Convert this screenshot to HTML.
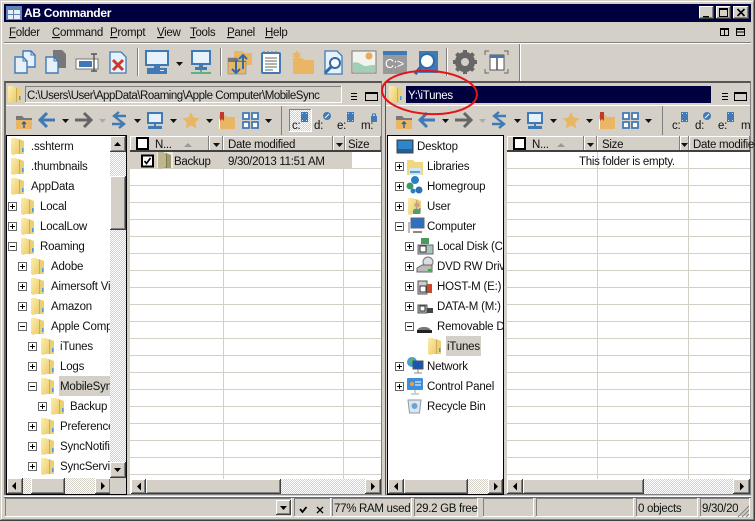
<!DOCTYPE html>
<html><head><meta charset="utf-8"><title>AB Commander</title>
<style>
html,body{margin:0;padding:0;background:#d4d0c8}
#w{position:relative;width:755px;height:521px;overflow:hidden;background:#d4d0c8;font-family:"Liberation Sans",sans-serif}
#w div{position:absolute;box-sizing:border-box}
.b{background:#d4d0c8;box-shadow:inset -1px -1px #404040,inset 1px 1px #fff,inset -2px -2px #808080}
.h{background:#d4d0c8;box-shadow:inset 0 -2px #404040,inset -1px 0 #808080,inset 1px 1px #fff}
.s{box-shadow:inset -1px -1px #fff,inset 1px 1px #808080}
.d{background:repeating-conic-gradient(#d4d0c8 0 25%,#fff 0 50%) 0 0/2px 2px}
.l{background:#d4d0c8}
svg{position:absolute;left:0;top:0}
text{font-family:"Liberation Sans",sans-serif;font-size:11.5px;letter-spacing:-.3px;fill:#111}
.t text{letter-spacing:-.2px}
</style></head><body>
<div id="w">
<div style="left:0;top:0;width:755px;height:521px;box-shadow:inset -1px -1px #404040,inset 0 1px #d4d0c8,inset 1px 0 #d4d0c8,inset -2px -2px #808080,inset 2px 2px #fff"></div>
<div style="left:4px;top:4px;width:747px;height:18px;background:#00003f"></div>
<div style="left:4px;top:42px;width:747px;height:1px;background:#808080"></div>
<div style="left:4px;top:43px;width:747px;height:1px;background:#fff"></div>
<div style="left:519px;top:44px;width:1px;height:37px;background:#808080"></div>
<div style="left:520px;top:44px;width:1px;height:37px;background:#fff"></div>
<div style="left:137px;top:48px;width:1px;height:28px;background:#808080"></div>
<div style="left:138px;top:48px;width:1px;height:28px;background:#fff"></div>
<div style="left:220px;top:48px;width:1px;height:28px;background:#808080"></div>
<div style="left:221px;top:48px;width:1px;height:28px;background:#fff"></div>
<div style="left:446px;top:48px;width:1px;height:28px;background:#808080"></div>
<div style="left:447px;top:48px;width:1px;height:28px;background:#fff"></div>
<div class="b" style="left:699px;top:6px;width:15px;height:13px"></div>
<div class="b" style="left:716px;top:6px;width:15px;height:13px"></div>
<div class="b" style="left:733px;top:6px;width:16px;height:13px"></div>
<!-- panels -->
<div style="left:4px;top:81px;width:378px;height:414px;border-top:2px solid #555;border-left:2px solid #666;border-right:1px solid #808080;border-bottom:1px solid #808080"></div>
<div style="left:385px;top:81px;width:366px;height:414px;border-top:2px solid #555;border-left:1px solid #555;border-right:1px solid #808080;border-bottom:1px solid #808080"></div>
<div class="s" style="left:25px;top:86px;width:317px;height:17px"></div>
<div style="left:406px;top:86px;width:305px;height:17px;background:#00003f"></div>
<div style="left:6px;top:105px;width:375px;height:1px;background:#fff"></div>
<div style="left:386px;top:105px;width:364px;height:1px;background:#fff"></div>
<div style="left:281px;top:106px;width:1px;height:29px;background:#808080"></div>
<div style="left:662px;top:106px;width:1px;height:29px;background:#808080"></div>
<div class="s d" style="left:289px;top:109px;width:23px;height:23px"></div>
<!-- left tree -->
<div style="left:6px;top:135px;width:121px;height:360px;background:#fff;border:1px solid #000"></div>
<div style="left:59px;top:376px;width:51px;height:20px;background:#d4d0c8"></div>
<div class="d" style="left:110px;top:136px;width:16px;height:342px"></div>
<div class="b" style="left:110px;top:136px;width:16px;height:16px"></div>
<div class="b" style="left:110px;top:176px;width:16px;height:54px"></div>
<div class="b" style="left:110px;top:462px;width:16px;height:16px"></div>
<div class="d" style="left:7px;top:478px;width:103px;height:16px"></div>
<div class="b" style="left:7px;top:478px;width:16px;height:16px"></div>
<div class="b" style="left:31px;top:478px;width:34px;height:16px"></div>
<div class="b" style="left:95px;top:478px;width:16px;height:16px"></div>
<div class="l" style="left:110px;top:478px;width:16px;height:16px"></div>
<!-- left list -->
<div style="left:130px;top:136px;width:251px;height:358px;background:#fff"></div>
<div class="l" style="left:130px;top:152px;width:222px;height:17px"></div>
<div class="h" style="left:130px;top:136px;width:79px;height:16px"></div>
<div class="h" style="left:209px;top:136px;width:14px;height:16px"></div>
<div class="h" style="left:223px;top:136px;width:110px;height:16px"></div>
<div class="h" style="left:333px;top:136px;width:12px;height:16px"></div>
<div class="h" style="left:345px;top:136px;width:36px;height:16px"></div>
<div class="d" style="left:131px;top:479px;width:250px;height:15px"></div>
<div class="b" style="left:131px;top:479px;width:15px;height:15px"></div>
<div class="b" style="left:146px;top:479px;width:135px;height:15px"></div>
<div class="b" style="left:365px;top:479px;width:16px;height:15px"></div>
<!-- right tree -->
<div style="left:387px;top:135px;width:117px;height:360px;background:#fff;border:1px solid #000"></div>
<div style="left:446px;top:336px;width:35px;height:20px;background:#d4d0c8"></div>
<div class="d" style="left:388px;top:479px;width:115px;height:15px"></div>
<div class="b" style="left:388px;top:479px;width:16px;height:15px"></div>
<div class="b" style="left:404px;top:479px;width:64px;height:15px"></div>
<div class="b" style="left:488px;top:479px;width:15px;height:15px"></div>
<!-- right list -->
<div style="left:507px;top:136px;width:243px;height:358px;background:#fff"></div>
<div class="h" style="left:507px;top:136px;width:77px;height:16px"></div>
<div class="h" style="left:584px;top:136px;width:13px;height:16px"></div>
<div class="h" style="left:597px;top:136px;width:83px;height:16px"></div>
<div class="h" style="left:680px;top:136px;width:9px;height:16px"></div>
<div class="h" style="left:689px;top:136px;width:61px;height:16px"></div>
<div class="d" style="left:507px;top:479px;width:243px;height:15px"></div>
<div class="b" style="left:507px;top:479px;width:16px;height:15px"></div>
<div class="b" style="left:523px;top:479px;width:121px;height:15px"></div>
<div class="b" style="left:733px;top:479px;width:17px;height:15px"></div>
<!-- status -->
<div style="left:4px;top:496px;width:747px;height:1px;background:#fff"></div>
<div style="left:4px;top:497px;width:747px;height:1px;background:#666"></div>
<div class="s" style="left:5px;top:498px;width:287px;height:19px"></div>
<div class="b" style="left:276px;top:500px;width:15px;height:15px"></div>
<div class="s" style="left:294px;top:498px;width:37px;height:19px"></div>
<div class="s" style="left:332px;top:498px;width:80px;height:19px"></div>
<div class="s" style="left:414px;top:498px;width:64px;height:19px"></div>
<div class="s" style="left:483px;top:498px;width:51px;height:19px"></div>
<div class="s" style="left:536px;top:498px;width:98px;height:19px"></div>
<div class="s" style="left:636px;top:498px;width:62px;height:19px"></div>
<div class="s" style="left:700px;top:498px;width:50px;height:19px"></div>

<svg width="755" height="521" viewBox="0 0 755 521">
<defs>
<clipPath id="c1"><rect x="7" y="136" width="103" height="342"/></clipPath>
<clipPath id="c2"><rect x="388" y="136" width="115" height="342"/></clipPath>
<clipPath id="c3"><rect x="0" y="106" width="379" height="29"/></clipPath>
<clipPath id="c4"><rect x="381" y="106" width="370" height="29"/></clipPath>
<clipPath id="c5"><rect x="702" y="498" width="36" height="19"/></clipPath>
<linearGradient id="yg" x1="0" y1="0" x2="1" y2="1"><stop offset="0" stop-color="#fbeeae"/><stop offset="1" stop-color="#eccb6c"/></linearGradient>
<g id="f"><path d="M0 1h8l5 2v13H1l-1-1z" fill="#edcf74"/><path d="M0 0h5l3 2v13l-6 2-2-1z" fill="url(#yg)"/><path d="M8 2h1v14H8z" fill="#c9ac5c"/><path d="M11 10h1.500v4H11z" fill="#4a9bdc"/></g>
<g id="fg"><path d="M0 1h8l5 2v13H1l-1-1z" fill="#a39a70"/><path d="M0 0h5l3 2v13l-6 2-2-1z" fill="#bdb68e"/><path d="M8 2h1v14H8z" fill="#7f7850"/></g>
<g id="p"><rect x=".5" y=".5" width="8" height="8" fill="#fff" stroke="#666"/><path d="M2 4.500h5M4.500 2v5" stroke="#000"/></g>
<g id="m"><rect x=".5" y=".5" width="8" height="8" fill="#fff" stroke="#666"/><path d="M2 4.500h5" stroke="#000"/></g>
<path id="dn" d="M0 0h7l-3.500 4z" fill="#111"/>
<g id="doc"><path d="M1 1h8l4 4v12H1z" fill="#e6f1fb" stroke="#3f7ab6" stroke-width="1.400"/><path d="M9 1v4h4" fill="none" stroke="#3f7ab6"/></g>
<g id="mon"><rect x="1" y="1" width="14" height="10" fill="#e6f1fb" stroke="#3f7ab6" stroke-width="2"/><path d="M7 12h2v2H7z" fill="#3f7ab6"/><rect x="1" y="14" width="14" height="3" fill="#3f7ab6"/></g>
<g id="drv"><rect width="7" height="10" fill="#3f7ab6"/><path d="M1 1h1v1H1zM5 1h1v1H5zM1 8h1v1H1zM5 8h1v1H5z" fill="#cfe0f0"/></g>
<g id="nav">
<path d="M16 116h6l2 2h8v11H16z" fill="#e9b665"/><path d="M16 116h6l2 2h8v2H16z" fill="#777"/><path d="M24 128v-5M22 124l2-2 2 2" stroke="#2a5f9a" stroke-width="1.400" fill="none"/>
<path d="M55 120H42M47 113l-7 7 7 7" stroke="#3f7ab6" stroke-width="3" fill="none"/>
<use href="#dn" x="62" y="119"/>
<path d="M75 120h14M84 113l7 7-7 7" stroke="#666" stroke-width="3" fill="none"/>
<path d="M99 119h7l-3.500 4z" fill="#aaa"/>
<path d="M126 116h-12M119 112l-5 4 5 4M112 124h12M119 120l5 4-5 4" stroke="#3f7ab6" stroke-width="2.400" fill="none"/>
<use href="#dn" x="134" y="119"/>
<use href="#mon" x="147" y="112"/>
<use href="#dn" x="170" y="119"/>
<path d="M191 112l2.600 5.500 5.900.8-4.300 4.100 1 5.900-5.200-2.800-5.200 2.800 1-5.900-4.300-4.100 5.900-.8z" fill="#e9b665"/>
<use href="#dn" x="206" y="119"/>
<path d="M219 115h6l2 2h8v12h-16z" fill="#e9b665"/><path d="M220 112h4v9l-2-2-2 2z" fill="#c0392b"/><path d="M219 119h1v10h-1z" fill="#fff"/>
<path d="M243 113h6v6h-6zM252 113h6v6h-6zM243 122h6v6h-6zM252 122h6v6h-6z" fill="#fff" stroke="#3f7ab6" stroke-width="1.800"/>
<use href="#dn" x="265" y="119"/>
</g>
</defs>

<!-- title -->
<rect x="6" y="6" width="16" height="14" fill="#5d83b5"/><rect x="8" y="10" width="5" height="4" fill="#e8eef6"/><rect x="14" y="10" width="6" height="4" fill="#e8eef6"/><rect x="8" y="15" width="5" height="4" fill="#e8eef6"/><rect x="14" y="15" width="6" height="4" fill="#e8eef6"/>
<text x="24" y="17" style="fill:#fff;font-weight:bold;font-size:12px;letter-spacing:-.3px">AB Commander</text>
<path d="M703 16h6v1.500h-6z" fill="#000"/>
<rect x="719.500" y="8.500" width="8" height="8" fill="none" stroke="#000"/><path d="M719 9h9" stroke="#000" stroke-width="2"/>
<path d="M737.500 9l7 7M744.500 9l-7 7" stroke="#000" stroke-width="1.600"/>

<!-- menu -->
<g>
<text x="9" y="36"><tspan text-decoration="underline">F</tspan>older</text>
<text x="52" y="36"><tspan text-decoration="underline">C</tspan>ommand</text>
<text x="110" y="36"><tspan text-decoration="underline">P</tspan>rompt</text>
<text x="157" y="36"><tspan text-decoration="underline">V</tspan>iew</text>
<text x="190" y="36"><tspan text-decoration="underline">T</tspan>ools</text>
<text x="227" y="36"><tspan text-decoration="underline">P</tspan>anel</text>
<text x="265" y="36"><tspan text-decoration="underline">H</tspan>elp</text>
</g>
<path d="M720.500 28.500h8v7h-8zM724.500 28.500v7M736.500 28.500h8v7h-8zM736.500 32h8" fill="none" stroke="#000"/><path d="M720 29h9M736 29h9" stroke="#000" stroke-width="2"/>

<!-- toolbar -->
<use href="#doc" x="22" y="50"/><use href="#doc" x="14" y="56"/>
<path d="M53 50h9l4 4v14H53z" fill="#777"/><use href="#doc" x="45" y="56"/>
<rect x="76" y="59" width="22" height="10" fill="#fff" stroke="#777"/><rect x="79" y="61" width="13" height="6" fill="#3f7ab6"/><path d="M91 54h6M91 71h6M94 54v17" stroke="#555" stroke-width="1.400"/>
<path d="M110 52h11l5 5v16h-16z" fill="#e6f1fb" stroke="#3f7ab6" stroke-width="1.300"/><path d="M113 60l10 10M123 60l-10 10" stroke="#c8392b" stroke-width="3"/>
<rect x="146" y="51" width="22" height="14" fill="#e6f1fb" stroke="#3f7ab6" stroke-width="2"/><rect x="154" y="66" width="6" height="2" fill="#3f7ab6"/><rect x="147" y="68" width="20" height="6" fill="#3f7ab6"/><rect x="160" y="70" width="4" height="1" fill="#e6f1fb"/>
<use href="#dn" x="176" y="62"/>
<rect x="192" y="51" width="18" height="13" fill="#e6f1fb" stroke="#3f7ab6" stroke-width="2"/><rect x="199" y="65" width="4" height="3" fill="#3f7ab6"/><rect x="195" y="67" width="12" height="3" fill="#3f7ab6"/><rect x="191" y="72" width="20" height="2" fill="#5fb085"/><rect x="200" y="70" width="2" height="3" fill="#5fb085"/>
<path d="M234 51h9l2 2h7v12h-18z" fill="#e9b665"/><path d="M228 58h9l2 3h7v13h-18z" fill="#e9b665" stroke="#777" stroke-width=".5"/><path d="M228 58h9l2 3h7v1h-18z" fill="#777"/><path d="M243 69V55M239 59l4-4 4 4M236 60v13M232 69l4 4 4-4" stroke="#2f6ba8" stroke-width="2" fill="none"/>
<rect x="262" y="53" width="18" height="20" rx="1" fill="#fff" stroke="#3f7ab6" stroke-width="2"/><path d="M265 58h12M265 61h12M265 64h12M265 67h12M265 70h8" stroke="#666"/><path d="M264 51v3M268 51v3M272 51v3M276 51v3" stroke="#777"/>
<path d="M293 58h9l2 2h10v14h-21z" fill="#e9b665"/><path d="M297 50l1 3 3-1-2 3 3 1-3 1 1 3-3-2-2 2 0-3-3 0 2-2-2-2 3 0z" fill="#e9b665"/>
<path d="M325 51h12l5 5v18h-17z" fill="#e6f1fb" stroke="#3f7ab6" stroke-width="1.300"/><circle cx="335" cy="63" r="5" fill="#fff" stroke="#2f6ba8" stroke-width="2"/><path d="M331 67l-6 6" stroke="#2f6ba8" stroke-width="3"/>
<rect x="352" y="51" width="24" height="22" fill="#f2f2ee" stroke="#777"/><circle cx="369" cy="56" r="3.500" fill="#e9a95e"/><path d="M353 72v-9c6-3 9 4 14 3 4-1 6-1 8-1v7z" fill="#9fd0b3"/>
<rect x="383" y="51" width="24" height="23" fill="#999"/><rect x="383" y="51" width="24" height="4" fill="#3f7ab6"/><text x="385" y="68" style="fill:#fff;font-size:12.500px">C:&gt;</text>
<path d="M419 51h19v22h-19z" fill="#3f7ab6"/><circle cx="427" cy="61" r="7" fill="#fff" stroke="#2f6ba8" stroke-width="2"/><path d="M421 67l-6 7" stroke="#2f6ba8" stroke-width="3.500"/>
<circle cx="465" cy="62" r="7.500" fill="none" stroke="#666" stroke-width="5"/><path d="M465 50v24M453 62h24M456.500 53.500l17 17M473.500 53.500l-17 17" stroke="#666" stroke-width="4"/><circle cx="465" cy="62" r="4" fill="#d4d0c8"/>
<rect x="490" y="55" width="14" height="15" fill="#fff" stroke="#555"/><rect x="490" y="55" width="14" height="3" fill="#3f7ab6"/><path d="M497 58v12" stroke="#555" stroke-width="1.500"/>
<path d="M485 55v-4h4M504 51h4v4M508 69v4h-4M489 73h-4v-4" fill="none" stroke="#666"/>

<!-- address -->
<use href="#f" x="8" y="86"/><use href="#f" x="389" y="86"/>
<text x="27" y="99" style="letter-spacing:-.47px">C:\Users\User\AppData\Roaming\Apple Computer\MobileSync</text>
<text x="408" y="99" style="fill:#fff">Y:\iTunes</text>
<path d="M351 93.500h6M351 96.500h6M351 99.500h6M722 93.500h6M722 96.500h6M722 99.500h6" stroke="#000"/>
<rect x="365.500" y="92.500" width="12" height="8" fill="none" stroke="#000"/><path d="M365 93h13" stroke="#000" stroke-width="2"/>
<rect x="734.500" y="92.500" width="12" height="8" fill="none" stroke="#000"/><path d="M734 93h13" stroke="#000" stroke-width="2"/>

<!-- nav rows -->
<g clip-path="url(#c3)"><use href="#nav"/></g>
<g clip-path="url(#c4)"><use href="#nav" x="380"/></g>
<g>
<text x="292" y="129">c:</text><use href="#drv" x="301" y="112"/>
<text x="314" y="129">d:</text><circle cx="327" cy="116" r="4" fill="#3f7ab6"/><path d="M325 118l4-4" stroke="#fff"/>
<text x="337" y="129">e:</text><use href="#drv" x="347" y="112"/>
<text x="361" y="129">m:</text><rect x="371" y="116" width="6" height="6" fill="#3f7ab6"/><path d="M372.500 116v-2h3v2" stroke="#3f7ab6" fill="none"/>
<text x="672" y="129">c:</text><use href="#drv" x="681" y="112"/>
<text x="695" y="129">d:</text><circle cx="707" cy="116" r="4" fill="#3f7ab6"/><path d="M705 118l4-4" stroke="#fff"/>
<text x="718" y="129">e:</text><use href="#drv" x="727" y="112"/>
<text x="741" y="129">m</text>
</g>

<!-- left tree -->
<g clip-path="url(#c1)" class="t">
<use href="#f" x="11" y="138"/><text x="31" y="150">.sshterm</text>
<use href="#f" x="11" y="158"/><text x="31" y="170">.thumbnails</text>
<use href="#f" x="11" y="178"/><text x="31" y="190">AppData</text>
<use href="#p" x="8" y="202"/><use href="#f" x="21" y="198"/><text x="40" y="210">Local</text>
<use href="#p" x="8" y="222"/><use href="#f" x="21" y="218"/><text x="40" y="230">LocalLow</text>
<use href="#m" x="8" y="242"/><use href="#f" x="21" y="238"/><text x="40" y="250">Roaming</text>
<use href="#p" x="18" y="262"/><use href="#f" x="31" y="258"/><text x="51" y="270">Adobe</text>
<use href="#p" x="18" y="282"/><use href="#f" x="31" y="278"/><text x="51" y="290">Aimersoft Video</text>
<use href="#p" x="18" y="302"/><use href="#f" x="31" y="298"/><text x="51" y="310">Amazon</text>
<use href="#m" x="18" y="322"/><use href="#f" x="31" y="318"/><text x="51" y="330">Apple Computer</text>
<use href="#p" x="28" y="342"/><use href="#f" x="41" y="338"/><text x="60" y="350">iTunes</text>
<use href="#p" x="28" y="362"/><use href="#f" x="41" y="358"/><text x="60" y="370">Logs</text>
<use href="#m" x="28" y="382"/><use href="#f" x="41" y="378"/><text x="60" y="390">MobileSync</text>
<use href="#p" x="38" y="402"/><use href="#f" x="51" y="398"/><text x="70" y="410">Backup</text>
<use href="#p" x="28" y="422"/><use href="#f" x="41" y="418"/><text x="60" y="430">Preferences</text>
<use href="#p" x="28" y="442"/><use href="#f" x="41" y="438"/><text x="60" y="450">SyncNotification</text>
<use href="#p" x="28" y="462"/><use href="#f" x="41" y="458"/><text x="60" y="470">SyncServices</text>
</g>
<path d="M114 146h7l-3.500-4zM114 468h7l-3.500 4zM12 486l4-4v8zM105 486l-4-4v8zM137 486.500l4-4v8zM375 486.500l-4-4v8zM394 486.500l4-4v8zM498 486.500l-4-4v8zM513 486.500l4-4v8zM744 486.500l-4-4v8z" fill="#000"/>

<!-- list grid -->
<path d="M130 168.500h251M130 185.500h251M130 202.500h251M130 219.500h251M130 236.500h251M130 253.500h251M130 270.500h251M130 287.500h251M130 304.500h251M130 321.500h251M130 338.500h251M130 355.500h251M130 372.500h251M130 389.500h251M130 406.500h251M130 423.500h251M130 440.500h251M130 457.500h251M130 474.500h251M223.500 152v327M343.500 152v327" stroke="#d4d0c8"/>
<path d="M507 168.500h243M507 185.500h243M507 202.500h243M507 219.500h243M507 236.500h243M507 253.500h243M507 270.500h243M507 287.500h243M507 304.500h243M507 321.500h243M507 338.500h243M507 355.500h243M507 372.500h243M507 389.500h243M507 406.500h243M507 423.500h243M507 440.500h243M507 457.500h243M507 474.500h243M597.500 152v327M688.500 152v327" stroke="#d4d0c8"/>

<!-- left list content -->
<rect x="137" y="138" width="11" height="11" fill="#fff" stroke="#000" stroke-width="2"/>
<text x="155" y="148">N...</text><path d="M184 147h8l-4-4z" fill="#999"/>
<use href="#dn" x="213" y="143"/><text x="228" y="148">Date modified</text><use href="#dn" x="336" y="143"/><text x="348" y="148">Size</text>
<rect x="141" y="155" width="12" height="12" fill="#fff"/><rect x="142" y="155.500" width="11" height="11" fill="#fff" stroke="#000" stroke-width="2"/><path d="M144.500 161l2 2.500 4-5.500" fill="none" stroke="#000" stroke-width="1.700"/>
<rect x="157" y="152" width="16" height="16" fill="#eeeae0"/><use href="#fg" x="158" y="152"/>
<text x="174" y="165">Backup</text><text x="228" y="165">9/30/2013 11:51 AM</text>

<!-- right list content -->
<rect x="514" y="138" width="11" height="11" fill="#fff" stroke="#000" stroke-width="2"/>
<text x="532" y="148">N...</text><path d="M557 147h8l-4-4z" fill="#999"/>
<use href="#dn" x="587" y="143"/><text x="602" y="148">Size</text><use href="#dn" x="681" y="143"/><text x="693" y="148">Date modified</text>
<text x="579" y="165">This folder is empty.</text>

<!-- right tree -->
<g clip-path="url(#c2)" class="t">
<rect x="397" y="140" width="16" height="13" fill="#1f5f9e" stroke="#444"/><rect x="398" y="141" width="14" height="8" fill="#2d86c9"/>
<text x="417" y="150">Desktop</text>
<use href="#p" x="395" y="162"/><path d="M407 160h6l2 2h8v13h-16z" fill="#f0d77f"/><path d="M409 168h12v7h-12z" fill="#cfe6f3"/><path d="M410 172h10" stroke="#5a9bc6" stroke-width="2"/><text x="427" y="170">Libraries</text>
<use href="#p" x="395" y="182"/><circle cx="415" cy="180" r="4" fill="#2d7fc4"/><circle cx="410" cy="186" r="3.500" fill="#3b9c6a"/><circle cx="419" cy="190" r="3.500" fill="#2f6fb6"/><circle cx="413" cy="191" r="2.500" fill="#2d7fc4"/><text x="427" y="190">Homegroup</text>
<use href="#p" x="395" y="202"/><use href="#f" x="408" y="198"/><circle cx="417" cy="205" r="2.500" fill="#c9a084"/><path d="M413 214v-3c0-3 7-3 7 0v3z" fill="#4f9a83"/><text x="427" y="210">User</text>
<use href="#m" x="395" y="222"/><rect x="411" y="218" width="13" height="10" fill="#2d6fc0" stroke="#666"/><path d="M408 222h2v11h-2z" fill="#bbb"/><path d="M413 232h9" stroke="#888" stroke-width="2"/><text x="427" y="230">Computer</text>
<use href="#p" x="405" y="242"/><rect x="418" y="245" width="15" height="9" fill="#a9c3b8" stroke="#667"/><path d="M421 238h8v6h-8z" fill="#4a9a58"/><rect x="420" y="246" width="6" height="6" fill="#fff" stroke="#333"/><text x="437" y="250">Local Disk (C:)</text>
<use href="#p" x="405" y="262"/><circle cx="428" cy="262" r="5" fill="#ddd" stroke="#777"/><path d="M417 268l5-3h10v7h-15z" fill="#bbb" stroke="#666"/><rect x="428" y="269" width="3" height="2" fill="#3a3"/><text x="437" y="270">DVD RW Drive (D:)</text>
<use href="#p" x="405" y="282"/><rect x="418" y="281" width="9" height="13" fill="#ccc" stroke="#555"/><path d="M427 284h5v9h-5z" fill="#c8492b"/><rect x="420" y="286" width="6" height="6" fill="#fff" stroke="#333"/><text x="437" y="290">HOST-M (E:)</text>
<use href="#p" x="405" y="302"/><rect x="418" y="305" width="9" height="8" fill="#a9c3b8" stroke="#555"/><rect x="420" y="306" width="5" height="5" fill="#fff" stroke="#333"/><path d="M427 308h6v5h-6z" fill="#444"/><text x="437" y="310">DATA-M (M:)</text>
<use href="#m" x="405" y="322"/><path d="M417 331c1-3 3-4 7-4s6 1 7 4v2h-14z" fill="#777"/><rect x="417" y="330" width="15" height="3" fill="#222"/><text x="437" y="330">Removable Disk (Y:)</text>
<use href="#f" x="428" y="338"/><text x="447" y="350">iTunes</text>
<use href="#p" x="395" y="362"/><circle cx="412" cy="362" r="5" fill="#3ba0d8"/><path d="M409 360l4-2 1 4-4 1z" fill="#5cb85c"/><rect x="413" y="361" width="10" height="8" fill="#1c54b2" stroke="#555"/><path d="M418 369v4M414 373h8" stroke="#888"/><text x="427" y="370">Network</text>
<use href="#p" x="395" y="382"/><rect x="407" y="378" width="16" height="12" rx="1" fill="#3f90d8"/><circle cx="412" cy="384" r="2" fill="#f0a040"/><path d="M415 382h6M415 385h6" stroke="#fff"/><path d="M415 390v3M411 394h8" stroke="#8aa"/><text x="427" y="390">Control Panel</text>
<path d="M408 400h13l-1.500 13h-10z" fill="#dde6ec" stroke="#8a9aa6"/><circle cx="414.500" cy="406" r="3" fill="#6aa4d8"/><text x="427" y="410">Recycle Bin</text>
</g>

<!-- status -->
<path d="M280 506h7l-3.500 4z" fill="#000"/>
<path d="M300 509l2.500 3 4-5" fill="none" stroke="#000" stroke-width="1.800"/><path d="M317 507l6 6M323 507l-6 6" stroke="#000" stroke-width="1.300"/>
<text x="334" y="512">77% RAM used</text>
<text x="416" y="512">29.2 GB free</text>
<text x="638" y="512">0 objects</text>
<g clip-path="url(#c5)"><text x="702" y="512">9/30/2013</text></g>
<path d="M738 517l11-11M742 517l7-7M746 517l3-3" stroke="#808080"/>

<!-- red ellipse -->
<ellipse cx="429.500" cy="92.500" rx="47.500" ry="21.500" fill="none" stroke="#e2151b" stroke-width="2" transform="rotate(3 429.500 92.500)"/>
</svg>
</div>
</body></html>
